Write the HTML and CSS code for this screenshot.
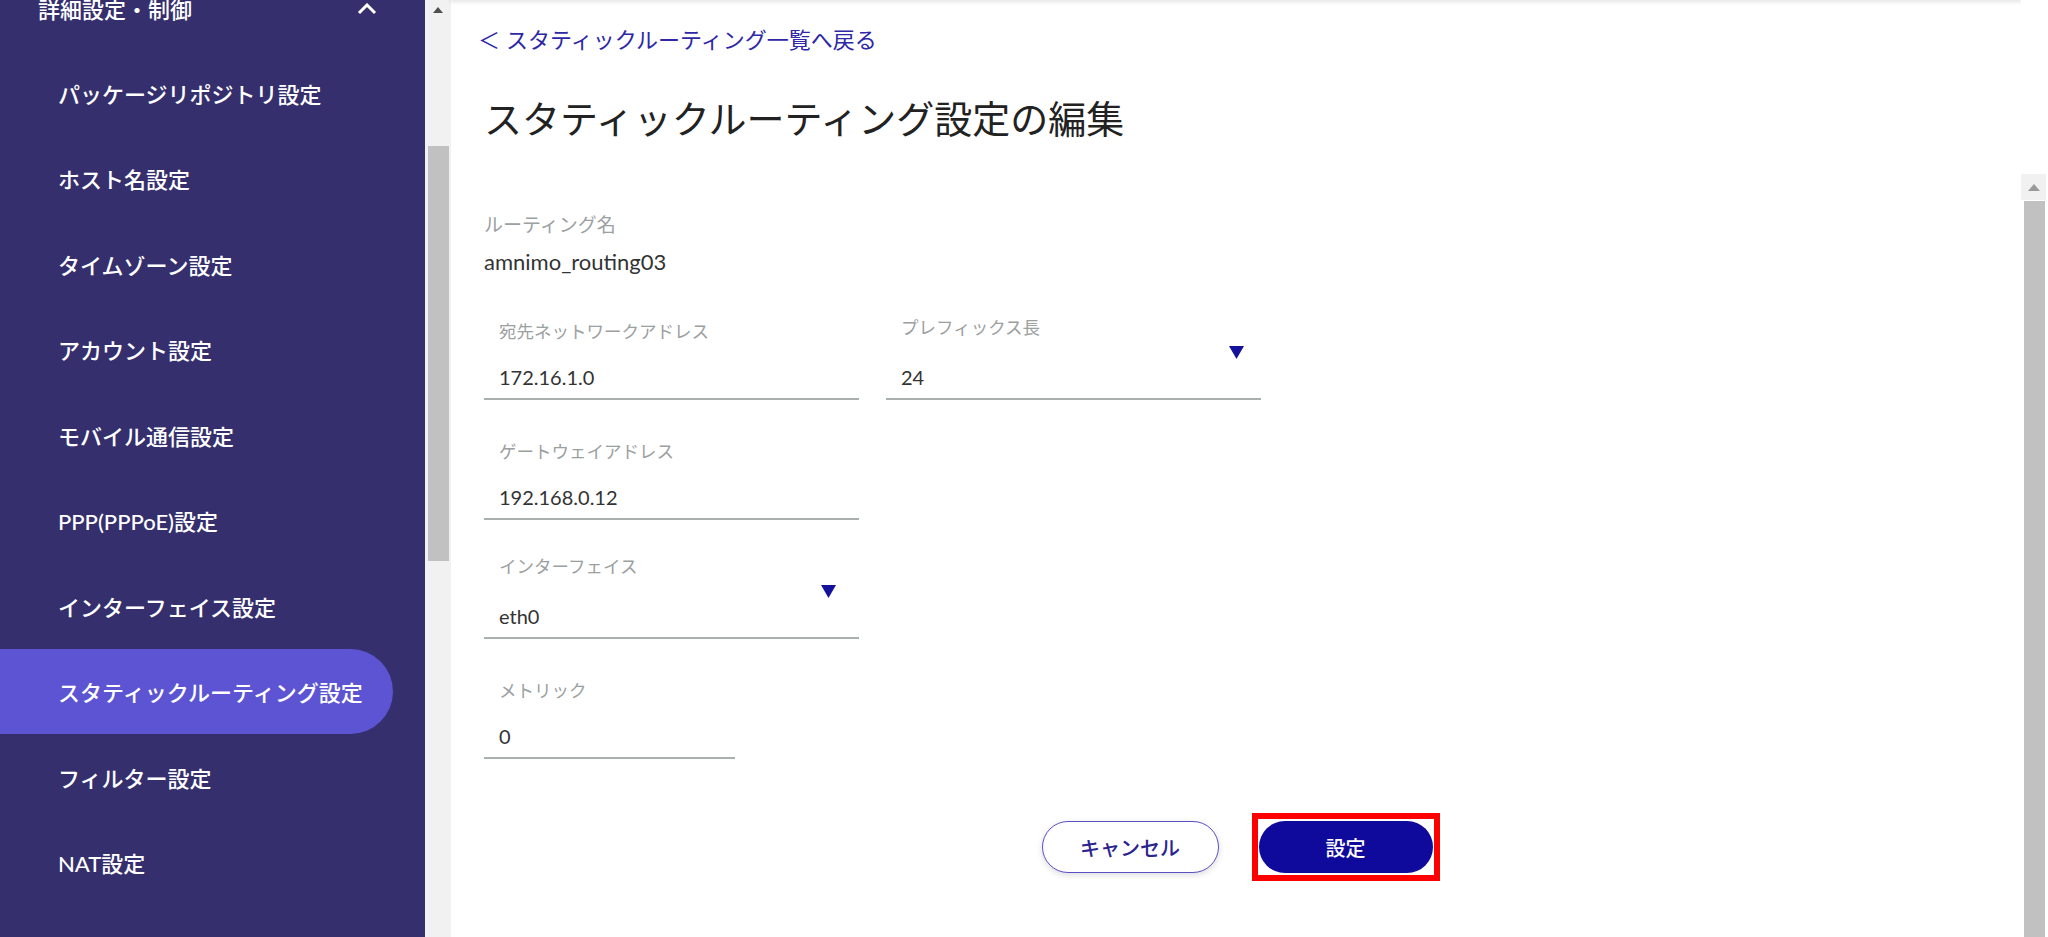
FILE: index.html
```html
<!DOCTYPE html>
<html lang="ja">
<head>
<meta charset="utf-8">
<title>スタティックルーティング設定の編集</title>
<link rel="stylesheet" href="styles.css">
</head>
<body>
<div class="app">
  <aside class="sidebar">
    <div class="side-inner">
      <div class="side-head">
        <span>詳細設定・制御</span>
        <svg class="chev" width="20" height="12" viewBox="0 0 20 12"><polyline points="2,10 10,2 18,10" fill="none" stroke="#ffffff" stroke-width="3"/></svg>
      </div>
      <div class="side-item">パッケージリポジトリ設定</div>
      <div class="side-item">ホスト名設定</div>
      <div class="side-item">タイムゾーン設定</div>
      <div class="side-item">アカウント設定</div>
      <div class="side-item">モバイル通信設定</div>
      <div class="side-item">PPP(PPPoE)設定</div>
      <div class="side-item">インターフェイス設定</div>
      <div class="side-item active">スタティックルーティング設定</div>
      <div class="side-item">フィルター設定</div>
      <div class="side-item">NAT設定</div>
    </div>
  </aside>
  <div class="side-scroll">
    <div class="sb-arrow"><svg width="10" height="6" viewBox="0 0 10 6"><path d="M0 6H10L5 0Z" fill="#505050"/></svg></div>
    <div class="sb-thumb side-thumb"></div>
  </div>
  <main class="main">
    <div class="topshadow"></div>
    <div class="content">
      <a class="back" href="#"><span class="back-mark">＜</span>スタティックルーティング一覧へ戻る</a>
      <h1 class="title">スタティックルーティング設定の編集</h1>
      <div class="name-label">ルーティング名</div>
      <div class="name-value">amnimo_routing03</div>
      <div class="form">
        <div class="form-row">
          <div class="field">
            <div class="field-label">宛先ネットワークアドレス</div>
            <div class="field-value">172.16.1.0</div>
          </div>
          <div class="field field-select arrow-a">
            <div class="field-label">プレフィックス長</div>
            <div class="field-arrow"><svg width="15" height="13" viewBox="0 0 15 13"><path d="M0 0H15L7.5 13Z" fill="#14129a"/></svg></div>
            <div class="field-value">24</div>
          </div>
        </div>
        <div class="form-row">
          <div class="field">
            <div class="field-label">ゲートウェイアドレス</div>
            <div class="field-value">192.168.0.12</div>
          </div>
        </div>
        <div class="form-row">
          <div class="field field-select arrow-b">
            <div class="field-label">インターフェイス</div>
            <div class="field-arrow"><svg width="15" height="13" viewBox="0 0 15 13"><path d="M0 0H15L7.5 13Z" fill="#14129a"/></svg></div>
            <div class="field-value">eth0</div>
          </div>
        </div>
        <div class="form-row">
          <div class="field field-short">
            <div class="field-label">メトリック</div>
            <div class="field-value">0</div>
          </div>
        </div>
      </div>
      <div class="buttons">
        <button class="btn btn-cancel">キャンセル</button>
        <span class="highlight"><button class="btn btn-submit">設定</button></span>
      </div>
    </div>
  </main>
  <div class="main-scroll">
    <div class="sb-box"><svg width="12" height="7" viewBox="0 0 12 7"><path d="M0 7H12L6 0Z" fill="#9a9a9a"/></svg></div>
    <div class="sb-thumb main-thumb"></div>
  </div>
</div>
</body>
</html>
```
FILE: styles.css
```css
* { box-sizing: border-box; }
html, body {
  margin: 0;
  padding: 0;
  height: 937px;
  overflow: hidden;
  background: #ffffff;
  font-family: "Lato", "Noto Sans CJK JP", sans-serif;
}
.app {
  display: flex;
  height: 937px;
}
.sidebar {
  width: 425px;
  flex: none;
  background: #352f6e;
  overflow: hidden;
  color: #ffffff;
}
.side-inner {
  margin-top: -35px;
}
.side-head {
  height: 85px;
  display: flex;
  align-items: center;
  justify-content: space-between;
  padding: 0 48px 0 38px;
  font-size: 22px;
  font-weight: 500;
}
.chev { margin-top: 2px; }
.side-item {
  height: 85.5px;
  display: flex;
  align-items: center;
  padding-left: 58px;
  font-size: 22px;
  font-weight: 500;
}
.side-item.active {
  width: 393px;
  background: #5c54d2;
  border-radius: 0 43px 43px 0;
}
.side-scroll {
  width: 26px;
  flex: none;
  background: #f1f1f1;
  display: flex;
  flex-direction: column;
}
.sb-arrow {
  height: 20px;
  display: flex;
  align-items: center;
  justify-content: center;
}
.sb-thumb { background: #c1c1c1; }
.side-thumb {
  margin: 126px 2px 0 3px;
  height: 415px;
}
.main {
  flex: 1;
  display: flex;
  flex-direction: column;
  min-width: 0;
}
.topshadow {
  height: 0;
  box-shadow: 0 0 4px 1px rgba(0, 0, 0, 0.22);
}
.content {
  padding: 25px 0 0 33px;
}
.back {
  display: block;
  font-size: 22px;
  line-height: 30px;
  color: #2e27a6;
  text-decoration: none;
  margin-left: -6px;
}
.back-mark {
  margin-right: 6px;
}
.title {
  margin: 38px 0 0 0;
  font-size: 38px;
  line-height: 50px;
  font-weight: 400;
  color: #222222;
}
.name-label {
  margin-top: 70px;
  font-size: 19px;
  line-height: 24px;
  color: #9ba0a1;
}
.name-value {
  margin-top: 10px;
  font-size: 22px;
  line-height: 30px;
  color: #333333;
}
.form {
  margin-top: 23px;
  display: flex;
  flex-direction: column;
  gap: 19.5px;
}
.form-row {
  display: flex;
  gap: 27px;
}
.field {
  width: 375px;
  height: 100px;
  padding: 20px 0 6px 15px;
  border-bottom: 2px solid #aab0b0;
}
.field-short { width: 251px; }
.field-label {
  font-size: 17.5px;
  line-height: 24px;
  color: #9ba0a1;
}
.field-value {
  margin-top: 18px;
  font-size: 20px;
  line-height: 30px;
  color: #333333;
}
.field-select { padding-top: 16px; }
.field-arrow {
  margin-top: 4px;
  height: 16px;
  display: flex;
  justify-content: flex-end;
  align-items: center;
}
.arrow-a .field-arrow { padding-right: 17px; }
.arrow-b .field-arrow { padding-right: 23px; }
.field-select .field-value { margin-top: 2px; }
.buttons {
  margin-top: 54.5px;
  display: flex;
  justify-content: center;
  align-items: center;
  gap: 33px;
  padding-right: 24px;
}
.btn {
  width: 177px;
  height: 52px;
  border-radius: 26px;
  font-family: "Lato", "Noto Sans CJK JP", sans-serif;
  font-size: 20px;
  font-weight: 500;
  cursor: pointer;
}
.btn-cancel {
  background: #ffffff;
  color: #2b2390;
  border: 1.5px solid #5a51c4;
  box-shadow: 0 2px 6px rgba(0, 0, 0, 0.14);
}
.highlight {
  display: inline-flex;
  border: 6px solid #ff0000;
  padding: 2px 1px;
}
.btn-submit {
  width: 174px;
  background: #100a9c;
  color: #ffffff;
  border: none;
}
.main-scroll {
  width: 25px;
  flex: none;
  margin-right: 2px;
  padding-top: 174px;
  display: flex;
  flex-direction: column;
  background: #ffffff;
}
.sb-box {
  height: 26px;
  background: #f1f1f1;
  display: flex;
  align-items: center;
  justify-content: center;
}
.main-thumb {
  flex: 1;
  margin: 1px 1px 0 3px;
}
```
